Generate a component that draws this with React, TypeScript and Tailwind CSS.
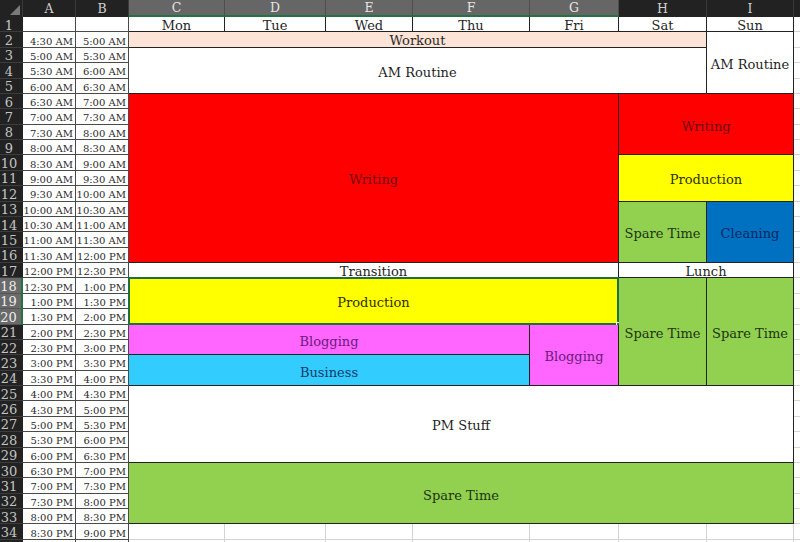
import React from 'react'

// column widths are taken from the sheet at 100% zoom
const HEADERS = [
  { letter: 'A', w: 'w-[53px]', sel: false },
  { letter: 'B', w: 'w-[53px]', sel: false },
  { letter: 'C', w: 'w-[96px]', sel: true },
  { letter: 'D', w: 'w-[101px]', sel: true },
  { letter: 'E', w: 'w-[87px]', sel: true },
  { letter: 'F', w: 'w-[117px]', sel: true },
  { letter: 'G', w: 'w-[89px]', sel: true },
  { letter: 'H', w: 'w-[88px]', sel: false },
  { letter: 'I', w: 'w-[87px]', sel: false },
]

const WHITE = 'bg-white text-[#1f1f1f]'
const RED = 'bg-[#ff0000] text-[#6e0a0a]'
const YELLOW = 'bg-[#ffff00] text-[#2f2f0a]'
const GREEN = 'bg-[#92d050] text-[#1c3512]'
const BLUE = 'bg-[#0070c0] text-[#0b2a66]'
const PINK = 'bg-[#ff66ff] text-[#6a1a7c]'
const CYAN = 'bg-[#33ccff] text-[#15386b]'

interface Block {
  label: string
  cls: string
  tone: string
  single?: boolean
  selected?: boolean
}

const BLOCKS: Block[] = [
  { label: 'Mon', cls: 'col-start-1 row-start-1', tone: WHITE, single: true },
  { label: 'Tue', cls: 'col-start-2 row-start-1', tone: WHITE, single: true },
  { label: 'Wed', cls: 'col-start-3 row-start-1', tone: WHITE, single: true },
  { label: 'Thu', cls: 'col-start-4 row-start-1', tone: WHITE, single: true },
  { label: 'Fri', cls: 'col-start-5 row-start-1', tone: WHITE, single: true },
  { label: 'Sat', cls: 'col-start-6 row-start-1', tone: WHITE, single: true },
  { label: 'Sun', cls: 'col-start-7 row-start-1', tone: WHITE, single: true },
  { label: 'Workout', cls: 'col-start-1 col-span-6 row-start-2', tone: 'bg-[#fce4d6] text-[#2a2a2a]', single: true },
  { label: 'AM Routine', cls: 'col-start-7 row-start-2 row-span-4', tone: WHITE },
  { label: 'AM Routine', cls: 'col-start-1 col-span-6 row-start-3 row-span-3', tone: WHITE },
  { label: 'Writing', cls: 'col-start-1 col-span-5 row-start-6 row-span-11', tone: RED },
  { label: 'Writing', cls: 'col-start-6 col-span-2 row-start-6 row-span-4', tone: RED },
  { label: 'Production', cls: 'col-start-6 col-span-2 row-start-10 row-span-3', tone: YELLOW },
  { label: 'Spare Time', cls: 'col-start-6 row-start-13 row-span-4', tone: GREEN },
  { label: 'Cleaning', cls: 'col-start-7 row-start-13 row-span-4', tone: BLUE },
  { label: 'Transition', cls: 'col-start-1 col-span-5 row-start-17', tone: WHITE, single: true },
  { label: 'Lunch', cls: 'col-start-6 col-span-2 row-start-17', tone: WHITE, single: true },
  { label: 'Production', cls: 'col-start-1 col-span-5 row-start-18 row-span-3', tone: YELLOW, selected: true },
  { label: 'Spare Time', cls: 'col-start-6 row-start-18 row-span-7', tone: GREEN },
  { label: 'Spare Time', cls: 'col-start-7 row-start-18 row-span-7', tone: GREEN },
  { label: 'Blogging', cls: 'col-start-1 col-span-4 row-start-21 row-span-2', tone: PINK },
  { label: 'Blogging', cls: 'col-start-5 row-start-21 row-span-4', tone: PINK },
  { label: 'Business', cls: 'col-start-1 col-span-4 row-start-23 row-span-2', tone: CYAN },
  { label: 'PM Stuff', cls: 'col-start-1 col-span-7 row-start-25 row-span-5', tone: WHITE },
  { label: 'Spare Time', cls: 'col-start-1 col-span-7 row-start-30 row-span-4', tone: GREEN },
]

// empty cells under the schedule (rows 34 and 35) keep the plain gridlines
const EMPTY = [
  'col-start-1 row-start-34', 'col-start-2 row-start-34', 'col-start-3 row-start-34', 'col-start-4 row-start-34',
  'col-start-5 row-start-34', 'col-start-6 row-start-34', 'col-start-7 row-start-34',
  'col-start-1 row-start-35', 'col-start-2 row-start-35', 'col-start-3 row-start-35', 'col-start-4 row-start-35',
  'col-start-5 row-start-35', 'col-start-6 row-start-35', 'col-start-7 row-start-35',
]

const ROWS = Array.from({ length: 35 }, (_, i) => i + 1)

function fmtTime(mins: number): string {
  const h24 = Math.floor(mins / 60) % 24
  const m = mins % 60
  const h = h24 % 12 === 0 ? 12 : h24 % 12
  return `${h}:${m.toString().padStart(2, '0')} ${h24 >= 12 ? 'PM' : 'AM'}`
}

// row 2 starts at 4:30 AM, every row is half an hour
function slot(row: number): [string, string] {
  const start = 4 * 60 + 30 + (row - 2) * 30
  return [fmtTime(start), fmtTime(start + 30)]
}

function ColumnHeader() {
  return (
    <div className="flex h-[17px] shrink-0 bg-[#222222]">
      <div className="relative w-[23px] shrink-0 border-r border-[#3a3a3a]">
        <svg className="absolute right-[2px] bottom-[2px]" width="10" height="10" viewBox="0 0 10 10">
          <polygon points="10,0 10,10 0,10" fill="#7a7a7a" />
        </svg>
      </div>
      {HEADERS.map((h) => (
        <div
          key={h.letter}
          className={
            h.sel
              ? `${h.w} shrink-0 flex items-center justify-center pt-[2px] bg-[#666666] text-[#e4e4e4] border-r border-[#4e4e4e] border-b-2 border-b-[#217346] text-[12.5px] leading-none`
              : `${h.w} shrink-0 flex items-center justify-center pt-[2px] text-[#d0d0d0] border-r border-[#3a3a3a] text-[12.5px] leading-none`
          }
        >
          {h.letter}
        </div>
      ))}
      <div className="flex-1" />
    </div>
  )
}

function TimeColumns() {
  return (
    <div className="grid grid-cols-[23px_53px_53px] grid-rows-[repeat(35,15.375px)] shrink-0">
      {ROWS.map((r) => {
        const sel = r >= 18 && r <= 20
        const [from, to] = r >= 2 && r <= 34 ? slot(r) : ['', '']
        return (
          <React.Fragment key={r}>
            <div
              className={
                sel
                  ? 'flex items-center justify-center pt-[2px] pr-[4px] bg-[#6a6a6a] text-[#eeeeee] border-b border-[#555555] border-r-2 border-r-[#217346] text-[13px] leading-none'
                  : 'flex items-center justify-center pt-[2px] pr-[5px] bg-[#222222] text-[#c4c4c4] border-b border-[#3c3c3c] text-[13px] leading-none'
              }
            >
              {r <= 34 ? r : ''}
            </div>
            <div className="flex items-center justify-end pt-[4px] pr-[2px] bg-white border-r border-b border-[#4a4a4a] text-[10px] text-[#2a2a2a] whitespace-nowrap leading-none">
              {from}
            </div>
            <div className="flex items-center justify-end pt-[4px] pr-[2px] bg-white border-r border-b border-[#4a4a4a] text-[10px] text-[#2a2a2a] whitespace-nowrap leading-none">
              {to}
            </div>
          </React.Fragment>
        )
      })}
    </div>
  )
}

function Schedule() {
  return (
    <div className="grid flex-1 grid-cols-[96px_101px_87px_117px_89px_88px_87px_6px] grid-rows-[repeat(35,15.375px)]">
      {BLOCKS.map((b, i) => (
        <div
          key={i}
          className={`${b.cls} ${b.tone} ${b.single ? 'pt-[2px]' : 'pt-[4px]'} relative flex items-center justify-center border-r border-b border-[#222222] text-[13px] leading-none whitespace-nowrap`}
        >
          {b.label}
          {b.selected && (
            <>
              <div className="pointer-events-none absolute -top-px -left-px right-[-1px] bottom-[-1px] border-2 border-[#1f6e43]" />
              <div className="absolute right-[-3px] bottom-[-3px] h-[5px] w-[5px] bg-[#1f6e43] border border-white" />
            </>
          )}
        </div>
      ))}
      {EMPTY.map((c) => (
        <div key={c} className={`${c} bg-white border-r border-b border-[#d4d4d4]`} />
      ))}
      {ROWS.map((r) => (
        <div key={`x${r}`} className="col-start-8 bg-white border-b border-[#d4d4d4]" />
      ))}
    </div>
  )
}

export default function App() {
  return (
    <div className="h-[542px] w-[800px] overflow-hidden bg-white flex flex-col font-['DejaVu_Serif',serif]">
      <ColumnHeader />
      <div className="flex">
        <TimeColumns />
        <Schedule />
      </div>
    </div>
  )
}
